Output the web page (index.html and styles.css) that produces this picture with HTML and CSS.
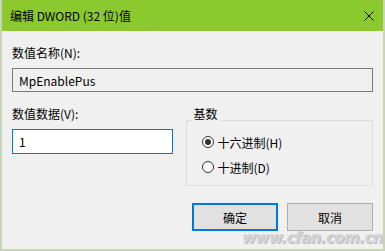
FILE: index.html
```html
<!DOCTYPE html>
<html lang="zh-CN">
<head>
  <meta charset="UTF-8" />
  <title>编辑 DWORD (32 位)值</title>
  <link rel="stylesheet" href="styles.css">
</head>
<body>
  <div class="window">
    <div class="titlebar">
      <span class="title">编辑 DWORD (32 位)值</span>
      <svg class="close" width="10" height="10" viewBox="0 0 10 10">
        <path d="M0.5 0.5 L9.5 9.5 M9.5 0.5 L0.5 9.5" stroke="#000" stroke-width="1" fill="none" />
      </svg>
    </div>
    <div class="content">
      <label class="label">数值名称(N):</label>
      <input class="field readonly" type="text" value="MpEnablePus" readonly />

      <div class="row">
        <div class="col-left">
          <label class="label">数值数据(V):</label>
          <input class="field active" type="text" value="1" />
        </div>
        <fieldset class="group">
          <legend>基数</legend>
          <div class="radio">
            <span class="dot checked"></span>
            <span>十六进制(H)</span>
          </div>
          <div class="radio">
            <span class="dot"></span>
            <span>十进制(D)</span>
          </div>
        </fieldset>
      </div>

      <div class="buttons">
        <button class="btn primary">确定</button>
        <button class="btn">取消</button>
      </div>
    </div>
    <span class="watermark">www.cfan.com.cn</span>
  </div>
</body>
</html>
```

FILE: styles.css
```css
body {
  margin: 0;
  font-family: "Noto Sans CJK SC", sans-serif;
  font-size: 12px;
  color: #000;
}
.window {
  position: relative;
  width: 385px;
  height: 251px;
  box-sizing: border-box;
  background: #f0f0f0;
  border: 2px solid #c7d5b6;
  border-top: none;
  display: flex;
  flex-direction: column;
  overflow: hidden;
}
.titlebar {
  height: 31px;
  margin: 0 -2px;
  background: #8bc92d;
  display: flex;
  align-items: center;
  justify-content: space-between;
  padding: 0 11px 0 10px;
}
.title {
  font-size: 12px;
  line-height: 16px;
}
.content {
  padding: 14px 10px 0 10px;
  display: flex;
  flex-direction: column;
}
.label {
  display: block;
  line-height: 16px;
  height: 16px;
}
.field {
  display: block;
  box-sizing: border-box;
  margin: 7px 0 0 0;
  height: 24px;
  padding: 0 6px;
  font-family: "Noto Sans CJK SC", sans-serif;
  font-size: 12px;
  outline: none;
}
.readonly {
  width: 361px;
  border: 1px solid #7a7a7a;
  background: #f0f0f0;
}
.active {
  width: 161px;
  height: 25px;
  border: 1px solid #0078d7;
  background: #fff;
}
.row {
  display: flex;
  margin-top: 14px;
}
.col-left {
  width: 174px;
}
.group {
  margin: 0;
  width: 188px;
  height: 80px;
  box-sizing: border-box;
  border: 1px solid #dcdcdc;
  padding: 0 0 0 15px;
}
.group legend {
  padding: 0 2px 12px 2px;
  margin-left: -10px;
  line-height: 16px;
}
.radio {
  display: flex;
  align-items: center;
  height: 16px;
  margin-bottom: 9px;
  gap: 4px;
}
.dot {
  width: 12px;
  height: 12px;
  box-sizing: border-box;
  border: 1px solid #333;
  border-radius: 50%;
  background: #fff;
  display: flex;
  align-items: center;
  justify-content: center;
}
.dot.checked::after {
  content: "";
  width: 6px;
  height: 6px;
  border-radius: 50%;
  background: #333;
}
.buttons {
  display: flex;
  justify-content: flex-end;
  gap: 9px;
  margin-top: 17px;
}
.btn {
  width: 86px;
  height: 28px;
  box-sizing: border-box;
  background: #e1e1e1;
  border: 1px solid #adadad;
  font-family: "Noto Sans CJK SC", sans-serif;
  font-size: 12px;
  padding: 0;
}
.btn.primary {
  border: 2px solid #0078d7;
}
.watermark {
  position: absolute;
  right: 0;
  bottom: 2px;
  font-family: "DejaVu Sans", sans-serif;
  font-size: 15px;
  font-weight: bold;
  font-style: italic;
  color: #d4d4d4;
  text-shadow: 1px 1px 0 #bdbdbd;
  letter-spacing: -0.5px;
}
```
